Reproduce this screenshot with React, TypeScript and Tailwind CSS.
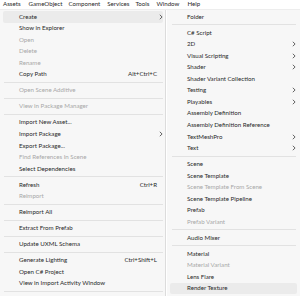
import React from "react";

type Item =
  | { sep: true }
  | { label: string; disabled?: boolean; shortcut?: string; arrow?: boolean; hl?: boolean };

const main: Item[] = [
  { label: "Create", arrow: true, hl: true },
  { label: "Show in Explorer" },
  { label: "Open", disabled: true },
  { label: "Delete", disabled: true },
  { label: "Rename", disabled: true },
  { label: "Copy Path", shortcut: "Alt+Ctrl+C" },
  { sep: true },
  { label: "Open Scene Additive", disabled: true },
  { sep: true },
  { label: "View in Package Manager", disabled: true },
  { sep: true },
  { label: "Import New Asset..." },
  { label: "Import Package", arrow: true },
  { label: "Export Package..." },
  { label: "Find References In Scene", disabled: true },
  { label: "Select Dependencies" },
  { sep: true },
  { label: "Refresh", shortcut: "Ctrl+R" },
  { label: "Reimport", disabled: true },
  { sep: true },
  { label: "Reimport All" },
  { sep: true },
  { label: "Extract From Prefab" },
  { sep: true },
  { label: "Update UXML Schema" },
  { sep: true },
  { label: "Generate Lighting", shortcut: "Ctrl+Shift+L" },
  { label: "Open C# Project" },
  { label: "View in Import Activity Window" },
  { sep: true },
];

const sub: Item[] = [
  { label: "Folder" },
  { sep: true },
  { label: "C# Script" },
  { label: "2D", arrow: true },
  { label: "Visual Scripting", arrow: true },
  { label: "Shader", arrow: true },
  { label: "Shader Variant Collection" },
  { label: "Testing", arrow: true },
  { label: "Playables", arrow: true },
  { label: "Assembly Definition" },
  { label: "Assembly Definition Reference" },
  { label: "TextMeshPro", arrow: true },
  { label: "Text", arrow: true },
  { sep: true },
  { label: "Scene" },
  { label: "Scene Template" },
  { label: "Scene Template From Scene", disabled: true },
  { label: "Scene Template Pipeline" },
  { label: "Prefab" },
  { label: "Prefab Variant", disabled: true },
  { sep: true },
  { label: "Audio Mixer" },
  { sep: true },
  { label: "Material" },
  { label: "Material Variant", disabled: true },
  { label: "Lens Flare" },
  { label: "Render Texture", hl: true },
];

function Chevron() {
  return (
    <svg width="4" height="6" viewBox="0 0 4 6" className="shrink-0">
      <path d="M0.8 0.8 L3.1 3 L0.8 5.2" fill="none" stroke="#555" strokeWidth="0.9" />
    </svg>
  );
}

function Menu({ items, sub }: { items: Item[]; sub?: boolean }) {
  return (
    <div className="flex flex-col">
      {items.map((it, i) =>
        "sep" in it ? (
          <div key={i} className={`h-[4.5px] flex items-center ${sub ? "pl-[5px] pr-[4px]" : "pl-[4px] pr-[2px]"}`}>
            <div className="h-px w-full bg-[#e2e2e2]" />
          </div>
        ) : (
          <div
            key={i}
            className={`h-[11.54px] flex items-center rounded-[2px] ${sub ? "ml-[3px] mr-[3px] pl-[17px] pr-[1px]" : "ml-[3px] mr-[2px] pl-[16px] pr-0"} ${it.hl ? "bg-[#ebebeb]" : ""}`}
          >
            <span className={`flex-1 whitespace-nowrap ${it.disabled ? "text-[#a8a8a8]" : "text-[#2a2a2a]"}`}>{it.label}</span>
            {it.shortcut && <span className="whitespace-nowrap text-[#2a2a2a] mr-[6px]">{it.shortcut}</span>}
            {it.arrow && <Chevron />}
            {!it.arrow && !it.shortcut && <span className="w-[4px]" />}
          </div>
        )
      )}
    </div>
  );
}

export default function App() {
  return (
    <div
      className="w-[300px] h-[296px] overflow-hidden bg-white flex flex-col text-[6.15px] leading-none"
      style={{ fontFamily: 'Lato, "Open Sans", sans-serif' }}
    >
      <div className="h-[10px] flex items-center bg-white text-[#2a2a2a] border-b border-[#ededed]">
        <span className="ml-[3px]">Assets</span>
        <span className="ml-[8px]">GameObject</span>
        <span className="ml-[6px]">Component</span>
        <span className="ml-[7px]">Services</span>
        <span className="ml-[6px]">Tools</span>
        <span className="ml-[7px]">Window</span>
        <span className="ml-[8px]">Help</span>
      </div>
      <div className="flex flex-1 min-h-0">
        <div className="w-[166px] bg-[#f7f7f7] border-r border-[#dcdcdc] pt-px">
          <Menu items={main} />
        </div>
        <div className="flex-1 bg-[#f7f7f7] ml-px pt-px">
          <Menu items={sub} sub />
        </div>
      </div>
    </div>
  );
}
